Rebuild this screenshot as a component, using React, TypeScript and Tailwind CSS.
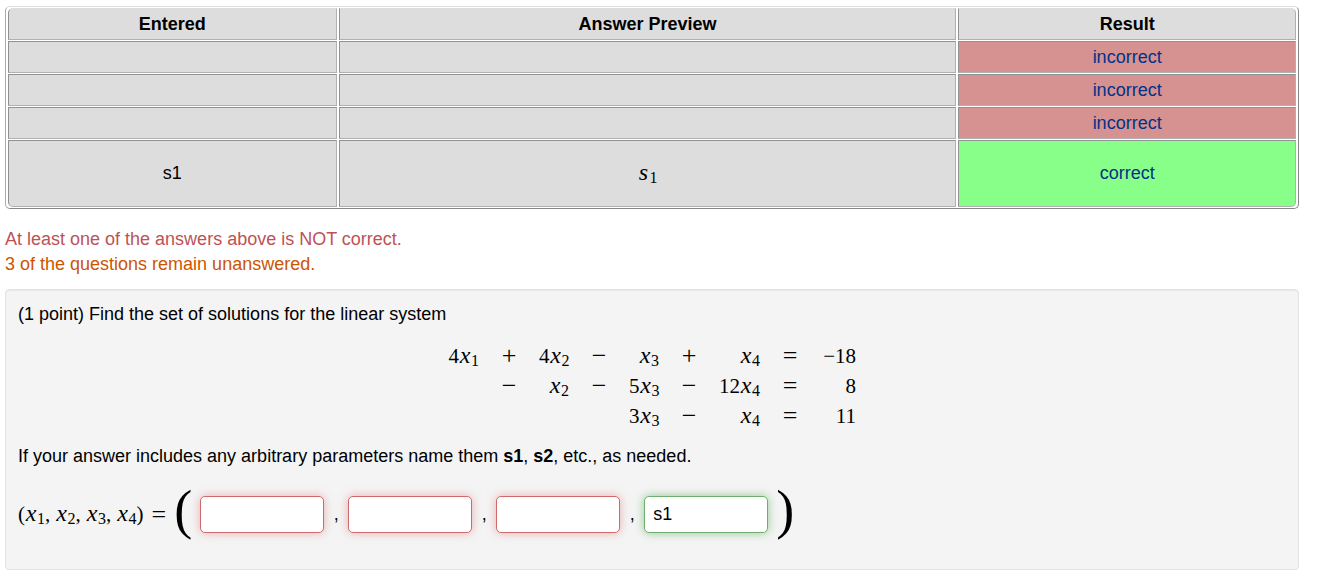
import React from 'react';

type Answer = { entered: string; preview?: React.ReactNode; correct: boolean };

const Var = ({ name = 'x', sub }: { name?: string; sub: number }) => (
  <span className="whitespace-nowrap">
    <i className="inline-block w-3 text-center text-[24px] leading-none">{name}</i>
    <sub className="-bottom-[3px] text-[16px] leading-none">{sub}</sub>
  </span>
);

const answers: Answer[] = [
  { entered: '', correct: false },
  { entered: '', correct: false },
  { entered: '', correct: false },
  { entered: 's1', preview: <Var name="s" sub={1} />, correct: true },
];

// Coefficient and variable index for each term, with operators in between
const system: React.ReactNode[][] = [
  [<>4<Var sub={1} /></>, '+', <>4<Var sub={2} /></>, '−', <Var sub={3} />, '+', <Var sub={4} />, '=', '−18'],
  ['', '−', <Var sub={2} />, '−', <>5<Var sub={3} /></>, '−', <>12<Var sub={4} /></>, '=', '8'],
  ['', '', '', '', <>3<Var sub={3} /></>, '−', <Var sub={4} />, '=', '11'],
];

const fields = [
  { value: '', correct: false },
  { value: '', correct: false },
  { value: '', correct: false },
  { value: 's1', correct: true },
];

const mathFont = "font-['Liberation_Serif',serif] text-[21px]";

const ResultsTable = () => (
  <table className="w-full table-fixed border-separate border-spacing-x-[2px] border-spacing-y-px rounded-[5px] border border-t-[#dddddd] border-l-[#aaaaaa] border-r-[#888888] border-b-[#888888] text-center">
    <colgroup>
      <col className="w-[25.6%]" />
      <col className="w-[48.1%]" />
      <col className="w-[26.3%]" />
    </colgroup>
    <thead>
      <tr className="h-8">
        <th className="rounded-tl-[5px] border border-t-[#dddddd] border-l-[#919191] border-r-[#b0b0b0] border-b-[#b0b0b0] bg-[#dddddd] p-0">Entered</th>
        <th className="border border-t-[#dddddd] border-l-[#919191] border-r-[#b0b0b0] border-b-[#b0b0b0] bg-[#dddddd] p-0">Answer Preview</th>
        <th className="rounded-tr-[5px] border border-t-[#dddddd] border-l-[#919191] border-r-[#b0b0b0] border-b-[#b0b0b0] bg-[#dddddd] p-0">Result</th>
      </tr>
    </thead>
    <tbody>
      {answers.map((answer, i) => (
        <tr
          key={i}
          className={
            answer.correct
              ? 'h-[67px] [&>td:first-child]:rounded-bl-[5px] [&>td:last-child]:rounded-br-[5px]'
              : 'h-8'
          }
        >
          <td className="border border-t-[#919191] border-l-[#919191] border-r-[#b0b0b0] border-b-[#b0b0b0] bg-[#dddddd] p-0">{answer.entered}</td>
          <td className="border border-t-[#919191] border-l-[#919191] border-r-[#b0b0b0] border-b-[#b0b0b0] bg-[#dddddd] p-0">
            <span className={mathFont}>{answer.preview}</span>
          </td>
          <td
            className={`border border-t-[#919191] border-l-[#919191] border-r-[#b0b0b0] border-b-[#b0b0b0] p-0 ${
              answer.correct ? 'bg-[#88ff88]' : 'bg-[#d69191]'
            }`}
          >
            <a href="#answers" className="text-[#003388]">{answer.correct ? 'correct' : 'incorrect'}</a>
          </td>
        </tr>
      ))}
    </tbody>
  </table>
);

const LinearSystem = () => (
  <div className={`grid auto-rows-[30px] grid-cols-[31px_60px_30px_60px_30px_60px_41px_60px_36px] justify-center leading-[30px] ${mathFont}`}>
    {system.flat().map((cell, i) => (
      <div key={i} className={(i % 9) % 2 ? 'text-center text-[26px]/[30px]' : 'text-right whitespace-nowrap'}>
        {cell}
      </div>
    ))}
  </div>
);

const BigParen = ({ children }: { children: string }) => (
  <span className="pb-2 font-['Liberation_Serif',serif] text-[54px] leading-[42px]">{children}</span>
);

const AnswerRow = () => (
  <div id="answers" className="flex h-[50px] items-center">
    <div className={`flex items-center gap-2 whitespace-nowrap ${mathFont}`}>
      <span>
        (<Var sub={1} />, <Var sub={2} />, <Var sub={3} />, <Var sub={4} />)
      </span>
      <span className="text-[26px]">=</span>
      <BigParen>(</BigParen>
    </div>
    {fields.map((field, i) => (
      <React.Fragment key={i}>
        {i > 0 && <span className="w-6 text-center">,</span>}
        <input
          type="text"
          aria-label={`answer ${i + 1}`}
          defaultValue={field.value}
          className={`h-[37px] w-[124px] rounded-[5px] border bg-white px-2 outline-none ${i === 0 ? 'ml-2' : ''} ${
            field.correct
              ? 'border-[#6fae6f] shadow-[0_0_10px_rgba(81,168,81,0.6)]'
              : 'border-[#d0696b] shadow-[0_0_10px_rgba(224,128,128,0.6)]'
          }`}
        />
      </React.Fragment>
    ))}
    <span className="ml-2 flex">
      <BigParen>)</BigParen>
    </span>
  </div>
);

export default function App() {
  return (
    <main className="bg-white pt-1.5 pr-[23px] pb-2 pl-[5px] font-['Liberation_Sans',Arial,sans-serif] text-[18px] leading-[25px] text-black">
      <ResultsTable />

      <div className="mt-[18px]">
        <p className="text-[#bd5255]">At least one of the answers above is NOT correct.</p>
        <p className="text-[#cc5500]">3 of the questions remain unanswered.</p>
      </div>

      <section className="mt-3 rounded-[4px] border border-[#e3e3e3] bg-[#f4f4f4] px-3 pt-3 pb-[30px] shadow-[inset_0_1px_1px_rgba(0,0,0,0.05)]">
        <p>(1 point) Find the set of solutions for the linear system</p>
        <div className="mt-[14px] mb-[13px]">
          <LinearSystem />
        </div>
        <p className="mb-5">
          If your answer includes any arbitrary parameters name them <b>s1</b>, <b>s2</b>, etc., as needed.
        </p>
        <AnswerRow />
      </section>
    </main>
  );
}
